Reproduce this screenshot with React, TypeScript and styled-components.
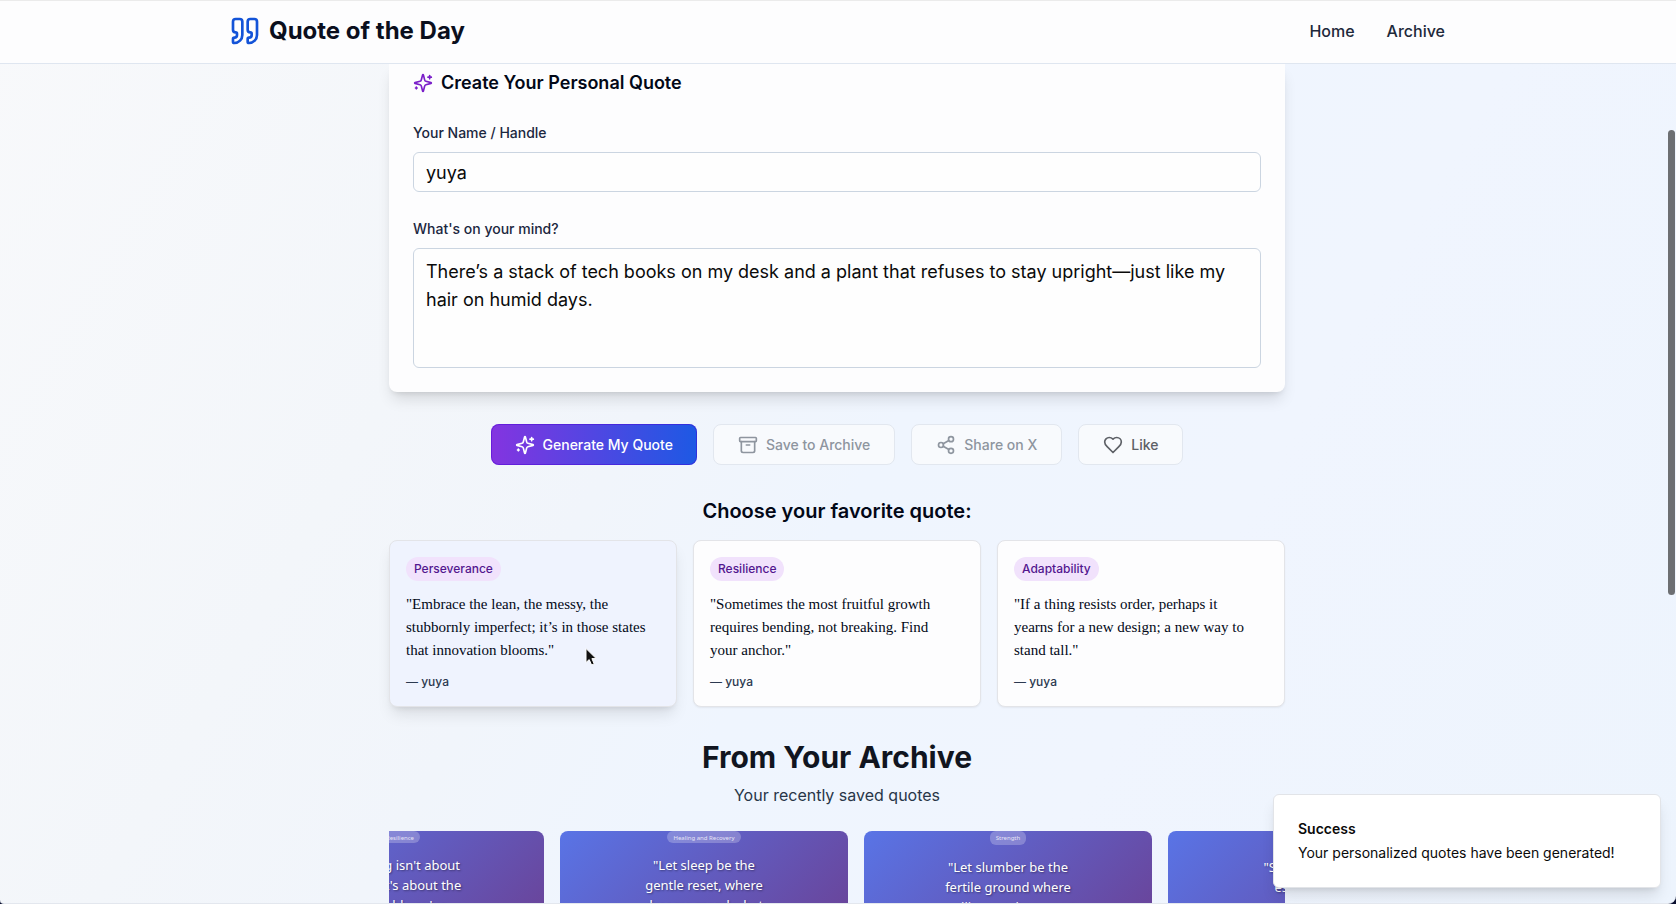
import React from "react";
import styled, { createGlobalStyle, css } from "styled-components";
import { Archive, Quote, Share2 } from "lucide-react";

const GlobalStyle = createGlobalStyle`
  *, *::before, *::after { box-sizing: border-box; }
  html, body { margin: 0; background: #0b1030; }
  body { font-family: Inter, "Liberation Sans", sans-serif; color: #020817; }
  h1, h2, h3, p, blockquote, figure { margin: 0; }
  button, input, textarea { font: inherit; }
`;

const Page = styled.div`
  position: relative;
  height: 100vh;
  overflow: hidden;
  padding-right: 2px;
  border-top: 1px solid #ebebeb;
  border-bottom: 1px solid #e3e7ee;
  border-radius: 0 0 8px 4px;
  background: linear-gradient(120deg, #f8f9fb 0%, #f3f6fa 28%, #f1f5fb 40%, #eff5fe 52%, #f0f5fe 70%, #edf4fd 100%);
`;

const Header = styled.header`
  position: relative;
  z-index: 2;
  margin-right: -2px;
  padding-right: 2px;
  background: #fdfdfe;
  border-bottom: 1px solid #dfe6f0;
`;

const HeaderInner = styled.div`
  display: flex;
  align-items: center;
  justify-content: space-between;
  max-width: 1280px;
  margin: 0 auto;
  padding: 14px 32px 16px;
`;

const Brand = styled.a`
  display: flex;
  align-items: center;
  gap: 8px;
  color: #0b0f1d;
  font-size: 24px;
  font-weight: 700;
  line-height: 32px;
  text-decoration: none;
`;

const Nav = styled.nav`
  display: flex;
  gap: 32px;
`;

const NavLink = styled.a`
  color: #1e293b;
  font-size: 16px;
  font-weight: 500;
  line-height: 24px;
  text-decoration: none;
`;

const Main = styled.main`
  max-width: 896px;
  margin: 0 auto;
`;

const FormCard = styled.form`
  padding: 4px 24px 24px;
  background: #fdfdfe;
  border-radius: 0 0 8px 8px;
  box-shadow: 0 10px 15px -3px rgba(0, 0, 0, 0.12), 0 4px 6px -4px rgba(0, 0, 0, 0.14);
`;

const FormTitle = styled.h2`
  display: flex;
  align-items: center;
  gap: 8px;
  font-size: 18px;
  font-weight: 600;
  line-height: 30px;
`;

const Fields = styled.div`
  display: flex;
  flex-direction: column;
  gap: 28px;
  margin-top: 26px;
`;

const Field = styled.div`
  display: flex;
  flex-direction: column;
  gap: 10px;
`;

const Label = styled.label`
  color: #1b2740;
  font-size: 14px;
  font-weight: 500;
  line-height: 18px;
`;

const control = css`
  display: block;
  width: 100%;
  margin: 0;
  border: 1px solid #cbd5e1;
  border-radius: 6px;
  background: #fefefe;
  color: #0a0a0a;
  font-size: 18px;
  line-height: 28px;
  outline: none;
`;

const TextInput = styled.input`
  ${control}
  height: 40px;
  padding: 4px 12px;
`;

const TextArea = styled.textarea`
  ${control}
  height: 120px;
  padding: 9px 12px;
  resize: none;
`;

const Actions = styled.div`
  display: flex;
  justify-content: center;
  gap: 16px;
  margin-top: 32px;
`;

const ActionButton = styled.button<{ $primary?: boolean; $tone?: string }>`
  display: inline-flex;
  align-items: center;
  gap: 8px;
  height: 41px;
  padding: 0 24px;
  border: 1px solid #e2e7ef;
  border-radius: 8px;
  background: #f8fafd;
  color: ${(p) => p.$tone ?? "#8e959f"};
  font-size: 14px;
  font-weight: 500;
  line-height: 20px;
  ${(p) =>
    p.$primary &&
    css`
      border: 0;
      background: linear-gradient(to right, #8434e0, #1d59e4);
      box-shadow: inset 0 0 0 1px rgba(70, 0, 210, 0.45);
      color: #fff;
    `}
`;

const ChoicesTitle = styled.h3`
  margin-top: 32px;
  font-size: 20px;
  font-weight: 600;
  line-height: 28px;
  text-align: center;
`;

const CardGrid = styled.div`
  display: grid;
  grid-template-columns: repeat(3, 1fr);
  gap: 16px;
  margin-top: 15px;
`;

const QuoteCard = styled.figure<{ $active?: boolean }>`
  position: relative;
  padding: 16px;
  border: 1px solid #e3e4e8;
  border-radius: 8px;
  background: ${(p) => (p.$active ? "#eff3fe" : "#fdfdfe")};
  box-shadow: ${(p) =>
    p.$active
      ? "0 10px 15px -3px rgba(0,0,0,.1), 0 4px 6px -4px rgba(0,0,0,.12)"
      : "0 1px 2px rgba(0,0,0,.06)"};
`;

const Tag = styled.span`
  display: table;
  padding: 4px 8px;
  border-radius: 12px;
  background: #f1e2fc;
  color: #53178f;
  font-size: 12px;
  font-weight: 500;
  line-height: 16px;
`;

const QuoteText = styled.blockquote`
  margin-top: 12px;
  font-family: Georgia, "Liberation Serif", serif;
  font-size: 15px;
  line-height: 23px;
  white-space: pre-line;
`;

const Author = styled.figcaption`
  margin-top: 12px;
  color: #2c3950;
  font-size: 12px;
  font-weight: 500;
  line-height: 16px;
`;

const Pointer = styled.svg`
  position: absolute;
  left: 194px;
  top: 106px;
`;

const ArchiveHeader = styled.div`
  margin-top: 32px;
  text-align: center;
`;

const ArchiveTitle = styled.h2`
  color: #11151f;
  font-size: 30px;
  font-weight: 700;
  line-height: 36px;
`;

const ArchiveSubtitle = styled.p`
  margin-top: 8px;
  color: #283548;
  font-size: 16px;
  line-height: 24px;
`;

const Carousel = styled.div`
  display: flex;
  justify-content: center;
  overflow: hidden;
  margin-top: 24px;
`;

const Track = styled.div`
  display: flex;
  flex: none;
  gap: 16px;
  margin-left: 38px;
`;

const ArchiveCard = styled.article`
  display: flex;
  flex: none;
  flex-direction: column;
  align-items: center;
  gap: 12px;
  width: 288px;
  height: 162px;
  overflow: hidden;
  border-radius: 8px;
  background: linear-gradient(135deg, #5974e6, #6a4398 85%);
  color: #fff;
  font-family: "Noto Sans", sans-serif;
`;

const ArchiveTag = styled.span<{ $low?: boolean }>`
  padding: ${(p) => (p.$low ? "3px 6px" : "3px 6px 1px")};
  border-radius: 6px;
  background: rgba(255, 255, 255, 0.24);
  color: #e6e4f5;
  font-size: 6px;
  line-height: 8px;
`;

const ArchiveText = styled.p`
  font-size: 13px;
  line-height: 20px;
  text-align: center;
  text-shadow: 1px 1px 2px rgba(0, 0, 0, 0.4);
  white-space: pre-line;
`;

const Toast = styled.div`
  position: absolute;
  right: 15px;
  bottom: 15px;
  z-index: 3;
  width: 388px;
  padding: 24px;
  border: 1px solid #e2e4e8;
  border-radius: 6px;
  background: #fff;
  box-shadow: 0 10px 15px -3px rgba(0, 0, 0, 0.12), 0 4px 6px -4px rgba(0, 0, 0, 0.12);
  color: #0a0a0a;
  font-size: 14px;
  line-height: 20px;
`;

const ToastTitle = styled.div`
  margin-bottom: 4px;
  font-weight: 600;
`;

const ScrollThumb = styled.div`
  position: absolute;
  top: 14.3%;
  right: 1px;
  z-index: 4;
  width: 7px;
  height: 51.5%;
  border-radius: 4px;
  background: #6d6f72;
`;

function SparklesIcon({ color = "currentColor" }: { color?: string }) {
  return (
    <svg width="20" height="20" viewBox="0 0 24 24" fill="none" stroke={color} strokeWidth="2" strokeLinecap="round" strokeLinejoin="round" aria-hidden="true">
      <path d="M9.937 15.5A2 2 0 0 0 8.5 14.063l-6.135-1.582a.5.5 0 0 1 0-.962L8.5 9.936A2 2 0 0 0 9.937 8.5l1.582-6.135a.5.5 0 0 1 .963 0L14.063 8.5A2 2 0 0 0 15.5 9.937l6.135 1.581a.5.5 0 0 1 0 .964L15.5 14.063a2 2 0 0 0-1.437 1.437l-1.582 6.135a.5.5 0 0 1-.963 0z" />
      <path d="M20 3v4M22 5h-4M4 17v2M5 18H3" />
    </svg>
  );
}

function HeartIcon() {
  return (
    <svg width="20" height="20" viewBox="0 0 24 24" fill="none" stroke="currentColor" strokeWidth="2" strokeLinecap="round" strokeLinejoin="round" aria-hidden="true">
      <path d="M19 14c1.49-1.46 3-3.21 3-5.5A5.5 5.5 0 0 0 16.5 3c-1.76 0-3 .5-4.5 2-1.5-1.5-2.74-2-4.5-2A5.5 5.5 0 0 0 2 8.5c0 2.3 1.5 4.05 3 5.5l7 7Z" />
    </svg>
  );
}

const choices = [
  {
    tag: "Perseverance",
    lines: ["\"Embrace the lean, the messy, the", "stubbornly imperfect; it’s in those states", "that innovation blooms.\""],
    active: true,
  },
  { tag: "Resilience", lines: ["\"Sometimes the most fruitful growth", "requires bending, not breaking. Find", "your anchor.\""] },
  { tag: "Adaptability", lines: ["\"If a thing resists order, perhaps it", "yearns for a new design; a new way to", "stand tall.\""] },
];

const archived = [
  { tag: "Resilience", lines: ["\"Healing isn't about", "winds; it's about the", "the field you've"] },
  { tag: "Healing and Recovery", lines: ["\"Let sleep be the", "gentle reset, where", "dreams mend what"] },
  { tag: "Strength", lines: ["\"Let slumber be the", "fertile ground where", "resilience takes root.\""], low: true },
  { tag: "Rest", lines: ["\"Sometimes the", "essence of a", "renewal.\""], low: true },
];

export default function App() {
  return (
    <>
      <GlobalStyle />
      <Page>
        <Header>
          <HeaderInner>
            <Brand href="#home">
              <Quote size={32} color="#1353d8" aria-hidden="true" />
              Quote of the Day
            </Brand>
            <Nav>
              <NavLink href="#home">Home</NavLink>
              <NavLink href="#archive">Archive</NavLink>
            </Nav>
          </HeaderInner>
        </Header>
        <Main>
          <FormCard>
            <FormTitle>
              <SparklesIcon color="#7a1fc9" />
              Create Your Personal Quote
            </FormTitle>
            <Fields>
              <Field>
                <Label htmlFor="handle">Your Name / Handle</Label>
                <TextInput id="handle" type="text" defaultValue="yuya" />
              </Field>
              <Field>
                <Label htmlFor="mind">What's on your mind?</Label>
                <TextArea
                  id="mind"
                  spellCheck={false}
                  defaultValue="There’s a stack of tech books on my desk and a plant that refuses to stay upright—just like my hair on humid days."
                />
              </Field>
            </Fields>
          </FormCard>
          <Actions>
            <ActionButton type="button" $primary>
              <SparklesIcon />
              Generate My Quote
            </ActionButton>
            <ActionButton type="button" disabled>
              <Archive size={20} aria-hidden="true" />
              Save to Archive
            </ActionButton>
            <ActionButton type="button" disabled>
              <Share2 size={20} aria-hidden="true" />
              Share on X
            </ActionButton>
            <ActionButton type="button" $tone="#5d6066">
              <HeartIcon />
              Like
            </ActionButton>
          </Actions>
          <ChoicesTitle>Choose your favorite quote:</ChoicesTitle>
          <CardGrid>
            {choices.map((c) => (
              <QuoteCard key={c.tag} $active={c.active}>
                <Tag>{c.tag}</Tag>
                <QuoteText>{c.lines.join("\n")}</QuoteText>
                <Author>— yuya</Author>
                {c.active && (
                  <Pointer width="16" height="20" viewBox="0 0 16 20" aria-hidden="true">
                    <path d="M2 1.500V15.500L5.200 12.600L7.600 18L10.200 16.900L7.900 11.600H12.200Z" fill="#111" stroke="#fff" strokeWidth="1" />
                  </Pointer>
                )}
              </QuoteCard>
            ))}
          </CardGrid>
          <ArchiveHeader>
            <ArchiveTitle>From Your Archive</ArchiveTitle>
            <ArchiveSubtitle>Your recently saved quotes</ArchiveSubtitle>
          </ArchiveHeader>
          <Carousel>
            <Track>
              {archived.map((a) => (
                <ArchiveCard key={a.tag}>
                  <ArchiveTag $low={a.low}>{a.tag}</ArchiveTag>
                  <ArchiveText>{a.lines.join("\n")}</ArchiveText>
                </ArchiveCard>
              ))}
            </Track>
          </Carousel>
        </Main>
        <Toast role="status">
          <ToastTitle>Success</ToastTitle>
          <div>Your personalized quotes have been generated!</div>
        </Toast>
        <ScrollThumb aria-hidden="true" />
      </Page>
    </>
  );
}
